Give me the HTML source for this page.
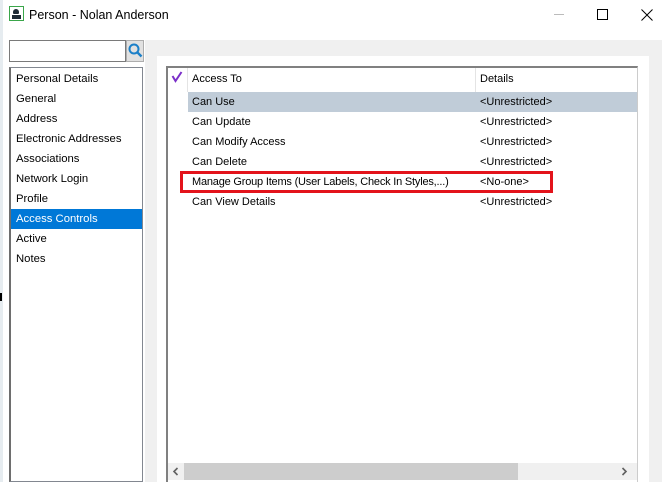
<!DOCTYPE html>
<html><head><style>
*{margin:0;padding:0;box-sizing:border-box}
body{width:670px;height:482px;overflow:hidden;background:#fff;font-family:"Liberation Sans",Arial,sans-serif;font-size:11px;color:#000;position:relative}
.a{position:absolute}
.row{position:absolute;left:188px;width:449px;height:20px;line-height:21px}
.row span{position:absolute}
.row .c1{left:4px}.row .c2{left:292px}
.nav div{height:20px;line-height:21px;padding-left:5px;font-size:11.3px}
</style></head><body>
<div class="a" style="left:0;top:0;width:3px;height:482px;background:#e6ecf0"></div>
<div class="a" style="left:0;top:293px;width:2px;height:8px;background:#000"></div>
<!-- title -->
<div class="a" style="left:9px;top:6px;width:15px;height:15px;border:1px solid #3aa64a;background:#fff"></div>
<div class="a" style="left:13px;top:9px;width:6px;height:5px;background:#1e2a35;border-radius:3px 3px 1px 1px"></div>
<div class="a" style="left:12px;top:15px;width:9px;height:4px;background:#1e2a35"></div>
<div class="a" style="left:29px;top:6px;font-size:12.5px;line-height:18px">Person - Nolan Anderson</div>
<div class="a" style="left:554px;top:14px;width:10px;height:1px;background:#bbb"></div>
<div class="a" style="left:597px;top:9px;width:11px;height:11px;border:1px solid #000"></div>
<svg class="a" style="left:641px;top:9px" width="12" height="12" viewBox="0 0 12 12"><path d="M0.5 0.5L11.5 11.5M11.5 0.5L0.5 11.5" stroke="#000" stroke-width="1"/></svg>
<!-- gray area -->
<div class="a" style="left:145px;top:40px;width:517px;height:442px;background:#f0f0f0"></div>
<div class="a" style="left:157px;top:56px;width:492px;height:426px;background:#fff"></div>
<!-- search -->
<div class="a" style="left:9px;top:40px;width:117px;height:22px;border:1px solid #7a7a7a;background:#fff"></div>
<div class="a" style="left:126px;top:40px;width:18px;height:22px;background:#e1e1e1;border:1px solid #adadad"></div>
<svg class="a" style="left:127px;top:42px" width="17" height="18" viewBox="0 0 17 18"><circle cx="7" cy="7" r="4.5" fill="none" stroke="#1a7fc8" stroke-width="2"/><line x1="10.3" y1="10.3" x2="14.5" y2="14.5" stroke="#1a7fc8" stroke-width="2.4"/></svg>
<!-- nav list -->
<div class="a nav" style="left:9px;top:67px;width:134px;height:415px;border:1px solid #828790;border-left:2px solid #6e6e6e;background:#fff;padding-top:1px">
<div>Personal Details</div><div>General</div><div>Address</div><div>Electronic Addresses</div><div>Associations</div><div>Network Login</div><div>Profile</div>
<div style="background:#0078d7;color:#fff">Access Controls</div><div>Active</div><div>Notes</div>
</div>
<!-- grid -->
<div class="a" style="left:166px;top:66px;width:472px;height:416px;border-top:2px solid #808080;border-left:2px solid #808080;border-right:1px solid #ccc;background:#fff"></div>
<svg class="a" style="left:171px;top:71px" width="12" height="12" viewBox="0 0 12 12"><path d="M1.5 5L4.5 10L10.5 1" fill="none" stroke="#7b2fc9" stroke-width="2"/></svg>
<div class="a" style="left:187px;top:68px;width:1px;height:24px;background:#e4e4e4"></div>
<div class="a" style="left:475px;top:68px;width:1px;height:24px;background:#e4e4e4"></div>
<div class="a" style="left:192px;top:69px;line-height:21px">Access To</div>
<div class="a" style="left:480px;top:69px;line-height:21px">Details</div>
<div class="row" style="top:92px;background:#c0ccd8"><span class="c1">Can Use</span><span class="c2">&lt;Unrestricted&gt;</span></div>
<div class="row" style="top:112px"><span class="c1">Can Update</span><span class="c2">&lt;Unrestricted&gt;</span></div>
<div class="row" style="top:132px"><span class="c1">Can Modify Access</span><span class="c2">&lt;Unrestricted&gt;</span></div>
<div class="row" style="top:152px"><span class="c1">Can Delete</span><span class="c2">&lt;Unrestricted&gt;</span></div>
<div class="row" style="top:172px"><span class="c1" style="letter-spacing:-0.2px">Manage Group Items (User Labels, Check In Styles,...)</span><span class="c2">&lt;No-one&gt;</span></div>
<div class="row" style="top:192px"><span class="c1">Can View Details</span><span class="c2">&lt;Unrestricted&gt;</span></div>
<div class="a" style="left:180px;top:171px;width:373px;height:22px;border:3px solid #e3131b"></div>
<!-- scrollbar -->
<div class="a" style="left:168px;top:463px;width:469px;height:17px;background:#f0f0f0"></div>
<div class="a" style="left:184px;top:463px;width:334px;height:17px;background:#cdcdcd"></div>
<svg class="a" style="left:172px;top:467px" width="8" height="9" viewBox="0 0 8 9"><path d="M5.5 1L2 4.5L5.5 8" fill="none" stroke="#606060" stroke-width="1.6"/></svg>
<svg class="a" style="left:620px;top:467px" width="8" height="9" viewBox="0 0 8 9"><path d="M2.5 1L6 4.5L2.5 8" fill="none" stroke="#606060" stroke-width="1.6"/></svg>
</body></html>
